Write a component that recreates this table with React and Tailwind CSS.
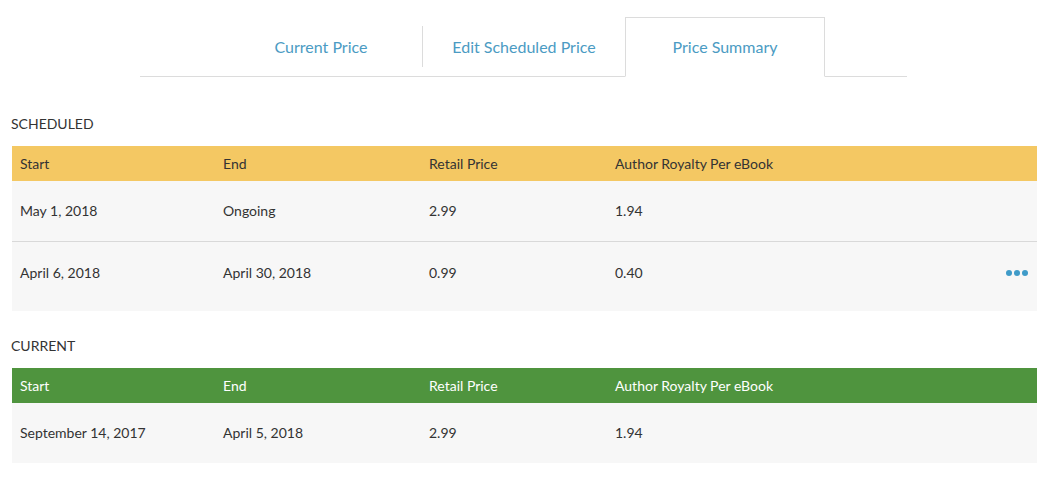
import React from 'react'

const cols = ['w-[203px]', 'w-[206px]', 'w-[186px]', 'flex-1']

function Table({ headClass, rows }) {
  return (
    <div className="mx-[12px] text-[14px] leading-[20px]">
      <div className={`flex h-[35px] items-center ${headClass}`}>
        {['Start', 'End', 'Retail Price', 'Author Royalty Per eBook'].map((h, i) => (
          <div key={h} className={`${cols[i]} pl-[8px]`}>{h}</div>
        ))}
      </div>
      {rows.map((r, idx) => {
        const last = idx === rows.length - 1
        return (
          <div
            key={idx}
            className={`flex items-center bg-[#f7f7f7] text-[#333] ${idx === 0 ? 'h-[60px]' : 'h-[69px] pb-[8px]'} ${last ? '' : 'box-content border-b border-[#d9d9d9]'}`}
          >
            {r.cells.map((c, i) => (
              <div key={i} className={`${cols[i]} pl-[8px]`}>{c}</div>
            ))}
            {r.more && (
              <div className="flex gap-[2px] pr-[9px]">
                <span className="h-[6px] w-[6px] rounded-full bg-[#3f9bc8]" />
                <span className="h-[6px] w-[6px] rounded-full bg-[#3f9bc8]" />
                <span className="h-[6px] w-[6px] rounded-full bg-[#3f9bc8]" />
              </div>
            )}
          </div>
        )
      })}
    </div>
  )
}

export default function App() {
  return (
    <div className="h-[502px] w-[1049px] bg-white font-['Lato','Open_Sans',sans-serif]">
      <div className="pt-[17px]">
        <div className="ml-[140px] flex w-[767px] border-b border-[#dcdcdc] pl-[80px] text-[16px] text-[#4b9bc3]">
          <div className="flex w-[202px] items-center justify-center">Current Price</div>
          <div className="my-[9px] w-px bg-[#dcdcdc]" />
          <div className="flex w-[202px] items-center justify-center">Edit Scheduled Price</div>
          <div className="-mb-px flex h-[60px] w-[200px] items-center justify-center border border-b-white border-[#dcdcdc] bg-white">
            Price Summary
          </div>
        </div>
      </div>

      <div className="mt-[37px] pl-[11px] text-[14px] leading-[20px] text-[#333]">SCHEDULED</div>
      <div className="mt-[12px]">
        <Table
          headClass="bg-[#f4c863] text-[#333]"
          rows={[
            { cells: ['May 1, 2018', 'Ongoing', '2.99', '1.94'] },
            { cells: ['April 6, 2018', 'April 30, 2018', '0.99', '0.40'], more: true },
          ]}
        />
      </div>

      <div className="mt-[25px] pl-[11px] text-[14px] leading-[20px] text-[#333]">CURRENT</div>
      <div className="mt-[12px]">
        <Table
          headClass="bg-[#4f943e] text-white"
          rows={[{ cells: ['September 14, 2017', 'April 5, 2018', '2.99', '1.94'] }]}
        />
      </div>
    </div>
  )
}
